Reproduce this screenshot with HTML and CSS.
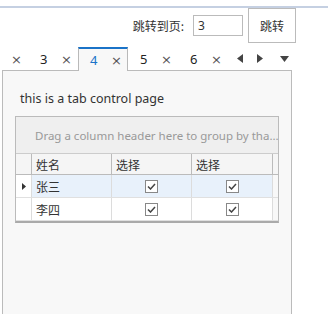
FILE: index.html
```html
<!DOCTYPE html>
<html>
<head>
<meta charset="utf-8">
<link rel="stylesheet" href="styles.css">
</head>
<body>
<div class="topline"></div>
<div class="toolbar">
  <span class="label">跳转到页:</span>
  <span class="input">3</span>
  <span class="btn">跳转</span>
</div>
<div class="tabctl">
  <div class="tabs">
    <div class="tab partial"><span class="x">×</span></div>
    <div class="tab"><span class="num">3</span><span class="x">×</span></div>
    <div class="tab active"><span class="num">4</span><span class="x">×</span></div>
    <div class="tab"><span class="num">5</span><span class="x">×</span></div>
    <div class="tab"><span class="num">6</span><span class="x">×</span></div>
    <div class="nav">
      <svg width="7" height="9" viewBox="0 0 7 9"><path d="M6 0 L6 9 L0 4.5 Z" fill="#444"/></svg>
      <svg width="7" height="9" viewBox="0 0 7 9"><path d="M0 0 L0 9 L6 4.5 Z" fill="#444"/></svg>
      <svg class="down" width="9" height="6" viewBox="0 0 9 6"><path d="M0 0 L9 0 L4.5 6 Z" fill="#444"/></svg>
    </div>
  </div>
  <div class="panel">
    <div class="caption">this is a tab control page</div>
    <div class="grid">
      <div class="group">Drag a column header here to group by tha...</div>
      <div class="row head">
        <div class="c ind"></div>
        <div class="c">姓名</div>
        <div class="c">选择</div>
        <div class="c">选择</div>
        <div class="c fill"></div>
      </div>
      <div class="row sel">
        <div class="c ind"><svg width="4" height="7" viewBox="0 0 4 7"><path d="M0 0 L0 7 L4 3.5 Z" fill="#333"/></svg></div>
        <div class="c">张三</div>
        <div class="c mid"><span class="cb"><svg width="9" height="7" viewBox="0 0 9 7"><path d="M1 3.5 L3.5 6 L8 1" fill="none" stroke="#444" stroke-width="1.5"/></svg></span></div>
        <div class="c mid"><span class="cb"><svg width="9" height="7" viewBox="0 0 9 7"><path d="M1 3.5 L3.5 6 L8 1" fill="none" stroke="#444" stroke-width="1.5"/></svg></span></div>
        <div class="c fill"></div>
      </div>
      <div class="row">
        <div class="c ind"></div>
        <div class="c">李四</div>
        <div class="c mid"><span class="cb"><svg width="9" height="7" viewBox="0 0 9 7"><path d="M1 3.5 L3.5 6 L8 1" fill="none" stroke="#444" stroke-width="1.5"/></svg></span></div>
        <div class="c mid"><span class="cb"><svg width="9" height="7" viewBox="0 0 9 7"><path d="M1 3.5 L3.5 6 L8 1" fill="none" stroke="#444" stroke-width="1.5"/></svg></span></div>
        <div class="c fill"></div>
      </div>
    </div>
  </div>
</div>
</body>
</html>
```
FILE: styles.css
```css
html, body {
  margin: 0;
  padding: 0;
  background: #fff;
  font-family: "Noto Sans", "Noto Sans CJK SC", sans-serif;
  color: #333;
  overflow: hidden;
}
.topline {
  margin-top: 6px;
  height: 2px;
  background: #c5d0e2;
}
.toolbar {
  display: flex;
  justify-content: flex-end;
  align-items: center;
  padding-right: 32px;
  height: 34px;
}
.label {
  font-size: 12px;
  color: #333;
  margin-right: 9px;
  font-family: "Noto Sans CJK SC", sans-serif;
}
.input {
  box-sizing: border-box;
  width: 50px;
  height: 21px;
  border: 1px solid #bbb;
  font-size: 12px;
  line-height: 19px;
  padding-left: 4px;
  margin-right: 5px;
  color: #333;
}
.btn {
  box-sizing: border-box;
  width: 48px;
  height: 35px;
  border: 1px solid #bbb;
  display: flex;
  align-items: center;
  justify-content: center;
  font-size: 12px;
  font-family: "Noto Sans CJK SC", sans-serif;
  color: #333;
}
.tabctl {
  margin-top: 5px;
  margin-left: 2px;
  width: 290px;
}
.tabs {
  display: flex;
  height: 23px;
  align-items: stretch;
  position: relative;
  z-index: 1;
}
.tab {
  box-sizing: border-box;
  width: 50px;
  display: flex;
  align-items: center;
  padding-left: 11px;
  font-size: 13px;
  color: #222;
  border: 1px solid transparent;
  border-bottom: none;
}
.tab.partial {
  width: 26px;
  padding-left: 8px;
}
.num {
  width: 21px;
}
.x {
  font-size: 13px;
  color: #555;
  font-family: "DejaVu Sans", sans-serif;
}
.tab.active {
  background: #f8f8f8;
  border-color: #b9b9b9;
  border-top: 2px solid #1a73c8;
  height: 24px;
  color: #1a73c8;
}
.nav {
  display: flex;
  align-items: center;
  padding-left: 9px;
  gap: 13px;
}
.nav .down {
  margin-left: 3px;
}
.panel {
  box-sizing: border-box;
  border: 1px solid #bbb;
  border-top-color: #bbb;
  background: #f8f8f8;
  height: 260px;
  padding: 19px 12px 0 12px;
}
.caption {
  font-size: 12.5px;
  color: #333;
  padding-left: 5px;
  height: 26px;
}
.grid {
  box-sizing: border-box;
  width: 264px;
  border: 1px solid #bbb;
  border-bottom: 2px solid #aaa;
  background: #f8f8f8;
}
.group {
  height: 36px;
  background: #efefef;
  border-bottom: 1px solid #ccc;
  font-size: 11.5px;
  color: #999;
  padding-left: 19px;
  display: flex;
  align-items: center;
  white-space: nowrap;
}
.row {
  display: grid;
  grid-template-columns: 15px 80px 80px 81px 1fr;
  height: 22px;
  border-bottom: 1px solid #e0e0e0;
}
.row.head {
  height: 20px;
  border-bottom: 1px solid #bbb;
  background: #f5f5f5;
}
.c {
  box-sizing: border-box;
  border-left: 1px solid #dcdcdc;
  font-size: 12px;
  font-family: "Noto Sans CJK SC", sans-serif;
  padding-left: 4px;
  display: flex;
  align-items: center;
  background: #fff;
  color: #333;
}
.head .c {
  border-left-color: #bbb;
  background: #f5f5f5;
}
.c.ind {
  border-left: none;
  padding-left: 6px;
}
.c.fill {
  background: transparent;
}
.row:not(.head) .c.fill {
  background: #f8f8f8;
}
.sel .c {
  background: #e8f1fb;
}
.sel .c.ind {
  background: #fff;
}
.c.mid {
  justify-content: center;
  padding-left: 0;
}
.cb {
  box-sizing: border-box;
  width: 13px;
  height: 13px;
  border: 1px solid #888;
  background: #fff;
  display: flex;
  align-items: center;
  justify-content: center;
}
```
